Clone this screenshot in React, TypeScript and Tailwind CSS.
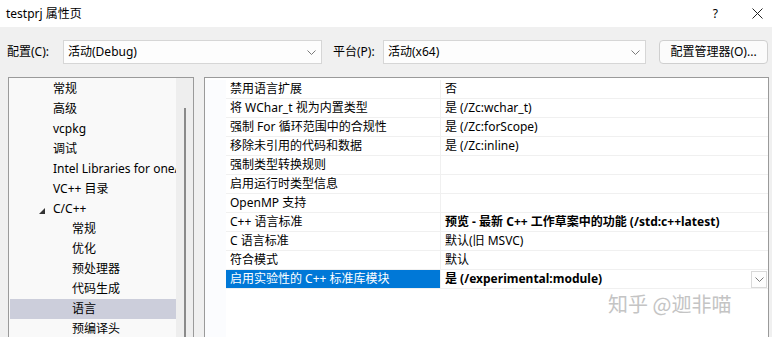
import React from "react";

const Chevron = ({ className = "" }: { className?: string }) => (
  <svg width="9" height="5" viewBox="0 0 9 5" className={className}>
    <path d="M0.5 0.5 L4.5 4.5 L8.5 0.5" fill="none" stroke="#7a7a7a" strokeWidth="1" />
  </svg>
);

const tree: { label: string; level: number; arrow?: boolean; selected?: boolean }[] = [
  { label: "常规", level: 1 },
  { label: "高级", level: 1 },
  { label: "vcpkg", level: 1 },
  { label: "调试", level: 1 },
  { label: "Intel Libraries for oneAPI", level: 1 },
  { label: "VC++ 目录", level: 1 },
  { label: "C/C++", level: 1, arrow: true },
  { label: "常规", level: 2 },
  { label: "优化", level: 2 },
  { label: "预处理器", level: 2 },
  { label: "代码生成", level: 2 },
  { label: "语言", level: 2, selected: true },
  { label: "预编译头", level: 2 },
];

const props: { name: string; value: string; bold?: boolean; selected?: boolean }[] = [
  { name: "禁用语言扩展", value: "否" },
  { name: "将 WChar_t 视为内置类型", value: "是 (/Zc:wchar_t)" },
  { name: "强制 For 循环范围中的合规性", value: "是 (/Zc:forScope)" },
  { name: "移除未引用的代码和数据", value: "是 (/Zc:inline)" },
  { name: "强制类型转换规则", value: "" },
  { name: "启用运行时类型信息", value: "" },
  { name: "OpenMP 支持", value: "" },
  { name: "C++ 语言标准", value: "预览 - 最新 C++ 工作草案中的功能 (/std:c++latest)", bold: true },
  { name: "C 语言标准", value: "默认(旧 MSVC)" },
  { name: "符合模式", value: "默认" },
  { name: "启用实验性的 C++ 标准库模块", value: "是 (/experimental:module)", bold: true, selected: true },
];

export default function App() {
  return (
    <div className="relative w-[772px] h-[337px] overflow-hidden bg-[#f0f0f0] text-[12px] text-black font-['Noto_Sans','Noto_Sans_CJK_SC',sans-serif]">
      {/* title bar */}
      <div className="h-[27px] bg-white flex items-center justify-between pl-[6px] pr-[9px]">
        <span className="leading-none">testprj 属性页</span>
        <div className="flex items-center gap-[34px]">
          <span className="text-[12px] leading-none">?</span>
          <svg width="11" height="11" viewBox="0 0 11 11">
            <path d="M0.5 0.5 L10.5 10.5 M10.5 0.5 L0.5 10.5" stroke="#222" strokeWidth="1" />
          </svg>
        </div>
      </div>

      {/* toolbar */}
      <div className="mt-[13px] h-[24px] flex items-center pl-[7px]">
        <span className="w-[56px] leading-none">配置(C):</span>
        <div className="w-[259px] h-[24px] bg-[#fdfdfd] border border-[#d6d6d6] flex items-center justify-between pl-[4px] pr-[5px]">
          <span>活动(Debug)</span>
          <Chevron />
        </div>
        <span className="ml-[11px] w-[50px] leading-none">平台(P):</span>
        <div className="w-[263px] h-[24px] bg-[#fdfdfd] border border-[#d6d6d6] flex items-center justify-between pl-[4px] pr-[5px]">
          <span>活动(x64)</span>
          <Chevron />
        </div>
        <div className="ml-[13px] w-[109px] h-[24px] bg-[#fbfbfb] border border-[#cfcfcf] rounded-[4px] flex items-center justify-center">
          配置管理器(O)...
        </div>
      </div>

      {/* panels */}
      <div className="mt-[13px] flex pl-[8px] gap-[10px] h-[270px]">
        {/* tree */}
        <div className="w-[186px] border-l border-t border-r border-[#9a9a9a] flex">
          <div className="w-[167px] bg-[#f9f9f9] pt-px overflow-hidden">
            {tree.map((t, i) => (
              <div
                key={i}
                className={`h-[20px] flex items-center whitespace-nowrap ml-px ${t.selected ? "bg-[#cccedb]" : ""} ${t.level === 2 ? "pl-[62px]" : "pl-[43px]"}`}
              >
                {t.arrow ? (
                  <span className="relative">
                    <svg width="6" height="6" viewBox="0 0 6 6" className="absolute left-[-14px] top-[-1px]">
                      <path d="M6 0 L6 6 L0 6 Z" fill="#333" />
                    </svg>
                  </span>
                ) : null}
                {t.label}
              </div>
            ))}
          </div>
          <div className="flex-1 bg-[#eeeeee] flex justify-center pt-[30px]">
            <div className="w-[2px] h-full bg-[#8a8a8a]" />
          </div>
        </div>

        {/* property grid */}
        <div className="w-[565px] border-l border-t border-r border-[#9a9a9a] bg-white flex pt-[2px]">
          <div className="w-[21px] bg-[#fbfcfe]" />
          <div className="flex-1 flex flex-col">
            {props.map((p, i) => (
              <div key={i} className="h-[19px] flex border-b border-[#f0f0f0]">
                <div
                  className={`w-[214px] flex items-center pl-[4px] whitespace-nowrap ${p.selected ? "bg-[#0078d7] text-white" : ""}`}
                >
                  {p.name}
                </div>
                <div className={`flex-1 flex items-center justify-between pl-[4px] border-l border-[#f0f0f0] whitespace-nowrap ${p.bold ? "font-bold" : ""}`}>
                  <span>{p.value}</span>
                  {p.selected ? (
                    <div className="w-[16px] h-[17px] border border-[#d9d9d9] bg-[#fdfdfd] flex items-center justify-center mr-px">
                      <Chevron />
                    </div>
                  ) : null}
                </div>
              </div>
            ))}
          </div>
        </div>
      </div>

      {/* watermark */}
      <div className="absolute left-[608px] top-[294px] text-[20px] leading-none text-[#c4c4c4] whitespace-nowrap font-['Noto_Sans_CJK_SC',sans-serif]">
        知乎 @迦非喵
      </div>
    </div>
  );
}
